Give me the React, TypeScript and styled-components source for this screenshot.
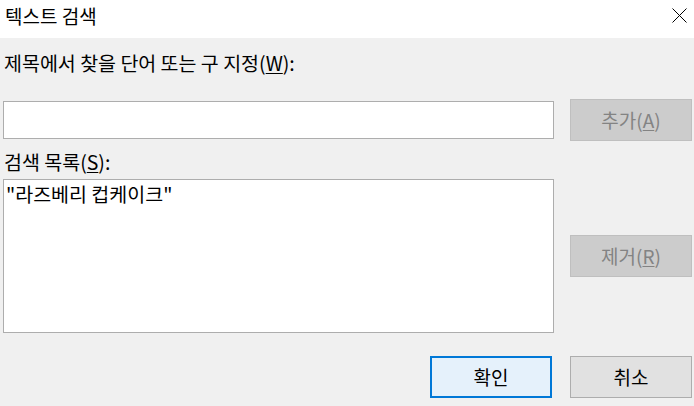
import React from "react";
import styled, { createGlobalStyle } from "styled-components";

const GlobalStyle = createGlobalStyle`
  html, body {
    margin: 0;
    padding: 0;
    background: #f0f0f0;
  }
  body {
    font-family: "Noto Sans CJK KR", "Noto Sans", sans-serif;
    color: #000;
  }
`;

// --- 창 틀 ---
const Window = styled.div`
  width: 694px;
  height: 406px;
  display: flex;
  flex-direction: column;
  background: #f0f0f0;
  overflow: hidden;
`;

const TitleBar = styled.div`
  height: 38px;
  background: #ffffff;
  display: flex;
  justify-content: space-between;
  align-items: flex-start;
  padding: 5px 7px 0 5px;
  box-sizing: border-box;
`;

const TitleText = styled.span`
  font-size: 19px;
  line-height: 22px;
`;

const CloseButton = styled.button`
  border: none;
  background: none;
  padding: 0;
  margin-top: 3px;
  width: 15px;
  height: 15px;
  display: flex;
`;

const Body = styled.div`
  flex: 1;
  display: flex;
  flex-direction: column;
  padding: 0 2px 0 3px;
`;

// --- 라벨 / 입력 ---
interface LabelProps {
  $top: number;
  $bottom: number;
}

const FieldLabel = styled.div<LabelProps>`
  font-size: 19.5px;
  line-height: 24px;
  padding-left: 1px;
  margin-top: ${(p) => p.$top}px;
  margin-bottom: ${(p) => p.$bottom}px;
`;

const Mnemonic = styled.u`
  text-decoration-thickness: 1px;
  text-underline-offset: 2px;
`;

interface RowProps {
  $align?: string;
}

const Row = styled.div<RowProps>`
  display: flex;
  gap: 16px;
  align-items: ${(p) => p.$align || "center"};
`;

const TextInput = styled.input`
  width: 551px;
  height: 38px;
  box-sizing: border-box;
  border: 1px solid #adadad;
  background: #ffffff;
  padding: 0 4px;
  font-family: inherit;
  font-size: 19px;
  outline: none;
`;

const ListBox = styled.div`
  width: 551px;
  height: 154px;
  box-sizing: border-box;
  border: 1px solid #adadad;
  background: #ffffff;
  padding: 3px 2px;
`;

const ListItem = styled.div`
  font-size: 19.5px;
  line-height: 22px;
`;

// --- 버튼 ---
type ButtonKind = "default" | "normal" | "disabled";

interface ButtonProps {
  $kind: ButtonKind;
  $offset?: number;
}

const DialogButton = styled.button<ButtonProps>`
  width: 122px;
  height: 42px;
  box-sizing: border-box;
  margin-top: ${(p) => p.$offset || 0}px;
  font-family: inherit;
  font-size: 19px;
  line-height: 22px;
  padding: 0;
  flex-shrink: 0;
  color: ${(p) => (p.$kind === "disabled" ? "#838383" : "#000000")};
  background: ${(p) =>
    p.$kind === "default"
      ? "#e5f1fb"
      : p.$kind === "disabled"
      ? "#cccccc"
      : "#e1e1e1"};
  border: ${(p) =>
    p.$kind === "default"
      ? "2px solid #0078d7"
      : p.$kind === "disabled"
      ? "1px solid #bfbfbf"
      : "1px solid #adadad"};
`;

const Footer = styled.div`
  display: flex;
  justify-content: flex-end;
  gap: 18px;
  margin-top: 23px;
`;

const CloseIcon = () => (
  <svg width="15" height="15" viewBox="0 0 15 15">
    <path d="M0.5 0.5 L14.5 14.5 M14.5 0.5 L0.5 14.5" stroke="#000" strokeWidth="1" fill="none" />
  </svg>
);

const App: React.FC = () => {
  return (
    <>
      <GlobalStyle />
      <Window>
        <TitleBar>
          <TitleText>텍스트 검색</TitleText>
          <CloseButton aria-label="닫기">
            <CloseIcon />
          </CloseButton>
        </TitleBar>
        <Body>
          <FieldLabel $top={13} $bottom={24}>
            제목에서 찾을 단어 또는 구 지정(<Mnemonic>W</Mnemonic>):
          </FieldLabel>
          <Row>
            <TextInput />
            <DialogButton $kind="disabled" disabled>
              추가(<Mnemonic>A</Mnemonic>)
            </DialogButton>
          </Row>
          <FieldLabel $top={9} $bottom={5}>
            검색 목록(<Mnemonic>S</Mnemonic>):
          </FieldLabel>
          <Row $align="flex-start">
            <ListBox>
              <ListItem>"라즈베리 컵케이크"</ListItem>
            </ListBox>
            <DialogButton $kind="disabled" $offset={56} disabled>
              제거(<Mnemonic>R</Mnemonic>)
            </DialogButton>
          </Row>
          <Footer>
            <DialogButton $kind="default">확인</DialogButton>
            <DialogButton $kind="normal">취소</DialogButton>
          </Footer>
        </Body>
      </Window>
    </>
  );
};

export default App;
